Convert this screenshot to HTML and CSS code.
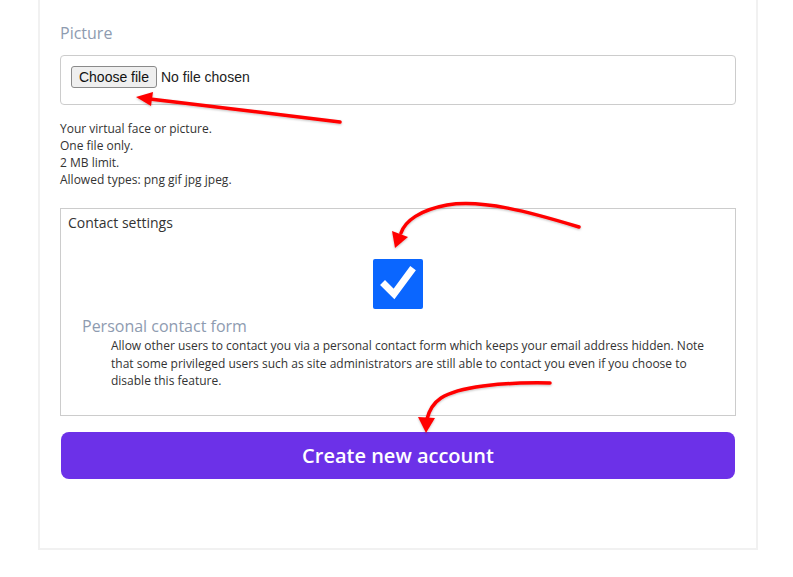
FILE: index.html
```html
<!DOCTYPE html>
<html lang="en">
<head>
<meta charset="utf-8">
<title>Create new account</title>
<link rel="stylesheet" href="styles.css">
</head>
<body>
<div class="page">
  <form class="card">
    <div class="field">
      <label class="field-label" for="picture">Picture</label>
      <div class="file-box">
        <input class="file-input" type="file" id="picture">
        <label class="file-button" for="picture">Choose file</label>
        <span class="file-name">No file chosen</span>
      </div>
      <div class="help">
        <div>Your virtual face or picture.</div>
        <div>One file only.</div>
        <div>2 MB limit.</div>
        <div>Allowed types: png gif jpg jpeg.</div>
      </div>
    </div>

    <div class="fieldset">
      <div class="fieldset-title">Contact settings</div>
      <div class="check-row">
        <span class="checkbox" role="checkbox" aria-checked="true">
          <svg viewBox="0 0 50 50" width="50" height="50"><polyline points="12,26 21,35 38,12" fill="none" stroke="#fff" stroke-width="7" stroke-linecap="square" stroke-linejoin="miter"/></svg>
        </span>
      </div>
      <div class="check-label">Personal contact form</div>
      <div class="check-desc">Allow other users to contact you via a personal contact form which keeps your email address hidden. Note that some privileged users such as site administrators are still able to contact you even if you choose to disable this feature.</div>
    </div>

    <button class="submit" type="button">Create new account</button>
  </form>

  <svg class="annotations" width="793" height="577" viewBox="0 0 793 577">
    <defs>
      <filter id="sh" x="-20%" y="-20%" width="140%" height="140%">
        <feDropShadow dx="0" dy="1" stdDeviation="1" flood-color="#000" flood-opacity="0.25"/>
      </filter>
    </defs>
    <g filter="url(#sh)" fill="#ff0000" stroke="#ff0000">
      <line x1="340" y1="122" x2="150" y2="99" stroke-width="3.5" stroke-linecap="round"/>
      <polygon stroke="none" points="136,97 153,92 151,106"/>

      <path d="M579,227 C530,212 482,199 447,205 C420,210 405,221 401,233" fill="none" stroke-width="3.5" stroke-linecap="round"/>
      <polygon stroke="none" points="395,248 392,231 408,237"/>

      <path d="M550,383 C500,382 458,387 441,398 C432,404 429,411 427,419" fill="none" stroke-width="3.5" stroke-linecap="round"/>
      <polygon stroke="none" points="426,433 418,417 435,418"/>
    </g>
  </svg>
</div>
</body>
</html>
```

FILE: styles.css
```css
html, body {
  margin: 0;
  padding: 0;
  background: #ffffff;
}

.page {
  position: relative;
  width: 793px;
  height: 577px;
  overflow: hidden;
  font-family: "Open Sans", "Liberation Sans", sans-serif;
  color: #333333;
}

.card {
  box-sizing: border-box;
  margin-left: 38px;
  width: 720px;
  height: 550px;
  border: 2px solid #f1f1f1;
  border-top: none;
  padding: 22px 20px 0 20px;
  display: flex;
  flex-direction: column;
}

.field {
  display: flex;
  flex-direction: column;
}

.field-label {
  font-size: 16px;
  line-height: 22px;
  color: #8e9bb0;
  margin-bottom: 11px;
}

.file-box {
  box-sizing: border-box;
  height: 50px;
  border: 1px solid #cccccc;
  border-radius: 4px;
  padding: 10px 10px;
  display: flex;
  align-items: flex-start;
  font-family: "Liberation Sans", Arial, sans-serif;
  font-size: 14px;
  color: #222;
}

.file-input {
  display: none;
}

.file-button {
  box-sizing: border-box;
  display: block;
  width: 86px;
  height: 22px;
  line-height: 20px;
  text-align: center;
  border: 1px solid #8a8a8a;
  border-radius: 3px;
  background: #efefef;
  color: #111;
}

.file-name {
  display: block;
  margin-left: 4px;
  line-height: 22px;
}

.help {
  margin-top: 15px;
  font-size: 12px;
  line-height: 17px;
  color: #333333;
}

.fieldset {
  box-sizing: border-box;
  margin-top: 20px;
  height: 208px;
  border: 1px solid #cccccc;
  padding: 4px 7px 0 7px;
  display: flex;
  flex-direction: column;
}

.fieldset-title {
  font-size: 14px;
  line-height: 20px;
  color: #333333;
}

.check-row {
  display: flex;
  justify-content: center;
  margin-top: 26px;
}

.checkbox {
  display: block;
  width: 50px;
  height: 50px;
  background: #0a66ff;
  border-radius: 2px;
}

.checkbox svg {
  display: block;
}

.check-label {
  margin-top: 6px;
  margin-left: 14px;
  font-size: 16px;
  line-height: 22px;
  color: #8e9bb0;
}

.check-desc {
  margin-left: 43px;
  margin-right: 20px;
  font-size: 12px;
  line-height: 17.5px;
  color: #333333;
}

.submit {
  box-sizing: border-box;
  margin-top: 16px;
  margin-left: 1px;
  width: 674px;
  height: 47px;
  border: none;
  border-radius: 8px;
  background: #6c31e8;
  color: #ffffff;
  font-family: "Open Sans", "Liberation Sans", sans-serif;
  font-weight: 600;
  font-size: 20px;
  line-height: 47px;
  padding: 0;
  text-align: center;
}

.annotations {
  position: absolute;
  left: 0;
  top: 0;
  pointer-events: none;
}
```
